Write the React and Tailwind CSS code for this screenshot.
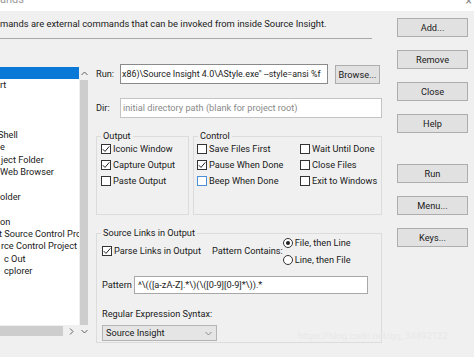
import React from "react";

const FONT = { fontFamily: 'Roboto, "Liberation Sans", Arial, sans-serif' };

function Box({ checked, hover }) {
  return (
    <span
      className={
        "w-[10px] h-[10px] shrink-0 border bg-white flex items-center justify-center " +
        (hover ? "border-[#4a90d9]" : "border-[#333333]")
      }
    >
      {checked && (
        <svg width="8" height="8" viewBox="0 0 8 8">
          <path d="M0.8 4.2 L3 6.4 L7.3 1.4" stroke="#222" strokeWidth="1" fill="none" />
        </svg>
      )}
    </span>
  );
}

function Check({ label, checked, hover }) {
  return (
    <div className="flex items-center h-[16px]">
      <Box checked={checked} hover={hover} />
      <span className="ml-[2px] whitespace-nowrap">{label}</span>
    </div>
  );
}

function Radio({ label, on }) {
  return (
    <div className="flex items-center h-[17px]">
      <span className="w-[10px] h-[10px] rounded-full border border-[#333333] bg-white flex items-center justify-center">
        {on && <span className="w-[4px] h-[4px] rounded-full bg-[#222]" />}
      </span>
      <span className="ml-[2px] whitespace-nowrap">{label}</span>
    </div>
  );
}

function Btn({ children, className = "" }) {
  return (
    <div
      className={
        "h-[19px] border border-[#adadad] bg-[#e1e1e1] flex items-center justify-center " + className
      }
    >
      {children}
    </div>
  );
}

function GroupLabel({ children }) {
  return (
    <div className="h-[12px] -mt-[7px] -mb-[5px] ml-[4px] px-[2px] w-fit bg-[#f0f0f0] leading-[12px] whitespace-nowrap">
      {children}
    </div>
  );
}

const listRows = [
  { t: "", sel: true },
  { t: "rt" },
  { t: "" },
  { t: "" },
  { t: "" },
  { t: "Shell", cls: "-ml-[2px]" },
  { t: "e" },
  { t: "ject Folder", cls: "ml-[1px]" },
  { t: "Web Browser" },
  { t: "" },
  { t: "older" },
  { t: "" },
  { t: "on" },
  { t: "t Source Control Proj", cls: "-ml-[1px]" },
  { t: "rce Control Project", cls: "ml-[1px]" },
  { t: "c Out", cls: "ml-[4px]" },
  { t: "cplorer", cls: "ml-[4px]" },
];

export default function App() {
  return (
    <div
      className="w-[474px] h-[357px] bg-[#f0f0f0] overflow-hidden flex flex-col text-[9.2px] text-[#1a1a1a] relative"
      style={FONT}
    >
      {/* title bar */}
      <div className="h-[11px] bg-white flex justify-between overflow-hidden shrink-0">
        <div className="-mt-[7px] text-[11px] text-[#9a9a9a] leading-[14px]">ands</div>
        <div className="-mt-[6px] mr-[2px] text-[12px] text-[#8a8a8a] leading-[14px]">×</div>
      </div>

      <div className="flex flex-1">
        {/* left / middle */}
        <div className="w-[390px] flex flex-col">
          <div className="mt-[7px] h-[12px] leading-[12px] whitespace-nowrap text-[9.4px]">
            mands are external commands that can be invoked from inside Source Insight.
          </div>
          <div className="mt-[8px] h-px w-[372px] bg-[#a8a8a8]" />

          <div className="mt-[25px] flex">
            {/* list */}
            <div className="w-[89px] mt-[3px] h-[270px] flex flex-col">
              <div className="flex h-[258px]">
                <div className="w-[79px] bg-white overflow-hidden">
                  {listRows.map((r, i) => (
                    <div
                      key={i}
                      className={
                        "h-[12.4px] leading-[12.4px] whitespace-nowrap " +
                        (r.sel ? "bg-[#0a78d7] " : "") +
                        (r.cls || "")
                      }
                    >
                      {r.t}
                    </div>
                  ))}
                </div>
                <div className="w-[10px] flex flex-col bg-[#f0f0f0]">
                  <div className="h-[13px] flex items-center justify-center">
                    <svg width="7" height="5" viewBox="0 0 7 5">
                      <path d="M0.5 4 L3.5 1 L6.5 4" stroke="#606060" strokeWidth="1" fill="none" />
                    </svg>
                  </div>
                  <div className="flex-1 mx-[1px] bg-[#cdcdcd]" />
                </div>
              </div>
              <div className="flex items-center h-[12px]">
                <div className="w-[63px] h-[10px] bg-[#cdcdcd]" />
                <div className="w-[16px] flex items-center justify-center">
                  <svg width="5" height="7" viewBox="0 0 5 7">
                    <path d="M1 0.5 L4 3.5 L1 6.5" stroke="#606060" strokeWidth="1" fill="none" />
                  </svg>
                </div>
                <div className="w-[10px] flex items-center justify-center">
                  <svg width="7" height="5" viewBox="0 0 7 5">
                    <path d="M0.5 1 L3.5 4 L6.5 1" stroke="#606060" strokeWidth="1" fill="none" />
                  </svg>
                </div>
              </div>
            </div>

            {/* form */}
            <div className="flex-1 pl-[7px] flex flex-col">
              <div className="flex h-[20px]">
                <div className="w-[24px] self-center">Run:</div>
                <div className="w-[208px] h-[20px] border border-[#8a8a8a] bg-white overflow-hidden whitespace-nowrap pl-[1px] leading-[18px] text-[8.9px]">
                  x86)\Source Insight 4.0\AStyle.exe" --style=ansi %f
                </div>
                <Btn className="ml-[7px] w-[45px] h-[18px] self-end">Browse...</Btn>
              </div>

              <div className="flex h-[20px] mt-[14px]">
                <div className="w-[24px] self-center">Dir:</div>
                <div className="w-[262px] h-[20px] border border-[#c4c4c4] bg-white overflow-hidden whitespace-nowrap pl-[2px] leading-[18px] text-[#8a8a8a]">
                  initial directory path (blank for project root)
                </div>
              </div>

              <div className="flex mt-[18px] gap-[4px]">
                <div className="w-[93px] h-[79px] border border-[#dcdcdc] flex flex-col">
                  <GroupLabel>Output</GroupLabel>
                  <div className="pl-[4px] mt-[4px]">
                    <Check label="Iconic Window" checked />
                    <Check label="Capture Output" checked />
                    <Check label="Paste Output" />
                  </div>
                </div>
                <div className="w-[189px] h-[79px] border border-[#dcdcdc] flex flex-col">
                  <GroupLabel>Control</GroupLabel>
                  <div className="pl-[3px] mt-[4px] flex">
                    <div className="w-[103px]">
                      <Check label="Save Files First" />
                      <Check label="Pause When Done" checked />
                      <Check label="Beep When Done" hover />
                    </div>
                    <div>
                      <Check label="Wait Until Done" />
                      <Check label="Close Files" />
                      <Check label="Exit to Windows" />
                    </div>
                  </div>
                </div>
              </div>

              <div className="mt-[18px] w-[286px] h-[110px] border border-[#dcdcdc] flex flex-col">
                <GroupLabel>Source Links in Output</GroupLabel>
                <div className="pl-[5px] flex flex-col">
                  <div className="flex items-center h-[34px]">
                    <div className="w-[111px]">
                      <Check label="Parse Links in Output" checked />
                    </div>
                    <div className="whitespace-nowrap">Pattern Contains:</div>
                    <div className="ml-auto mr-[3px] flex flex-col w-[96px]">
                      <Radio label="File, then Line" on />
                      <Radio label="Line, then File" />
                    </div>
                  </div>
                  <div className="flex items-center h-[18px] mt-[8px]">
                    <div className="w-[32px]">Pattern</div>
                    <div className="w-[234px] h-[18px] border border-[#a8a8a8] bg-white overflow-hidden whitespace-nowrap pl-[3px] leading-[16px]">
                      ^\(([a-zA-Z].*\)(\([0-9][0-9]*\)).*
                    </div>
                  </div>
                  <div className="mt-[14px] h-[12px] leading-[12px]">Regular Expression Syntax:</div>
                  <div className="mt-[5px] w-[115px] h-[16px] border border-[#b4b4b4] bg-[#e5e5e5] flex items-center justify-between pl-[3px] pr-[4px]">
                    <span>Source Insight</span>
                    <svg width="7" height="5" viewBox="0 0 7 5">
                      <path d="M0.5 1 L3.5 4 L6.5 1" stroke="#8a8a8a" strokeWidth="1" fill="none" />
                    </svg>
                  </div>
                </div>
              </div>
            </div>
          </div>
        </div>

        {/* buttons */}
        <div className="w-[71px] ml-[7px] pt-[7px] flex flex-col">
          <Btn>Add...</Btn>
          <Btn className="mt-[13px]">Remove</Btn>
          <Btn className="mt-[13px]">Close</Btn>
          <Btn className="mt-[13px]">Help</Btn>
          <Btn className="mt-[31px]">Run</Btn>
          <Btn className="mt-[13px]">Menu...</Btn>
          <Btn className="mt-[13px]">Keys...</Btn>
        </div>
      </div>

      <div className="absolute left-[298px] top-[329px] text-[9.5px] text-[#e8e8e8] whitespace-nowrap">
        https://blog.csdn.net/qq_34492122
      </div>
    </div>
  );
}
